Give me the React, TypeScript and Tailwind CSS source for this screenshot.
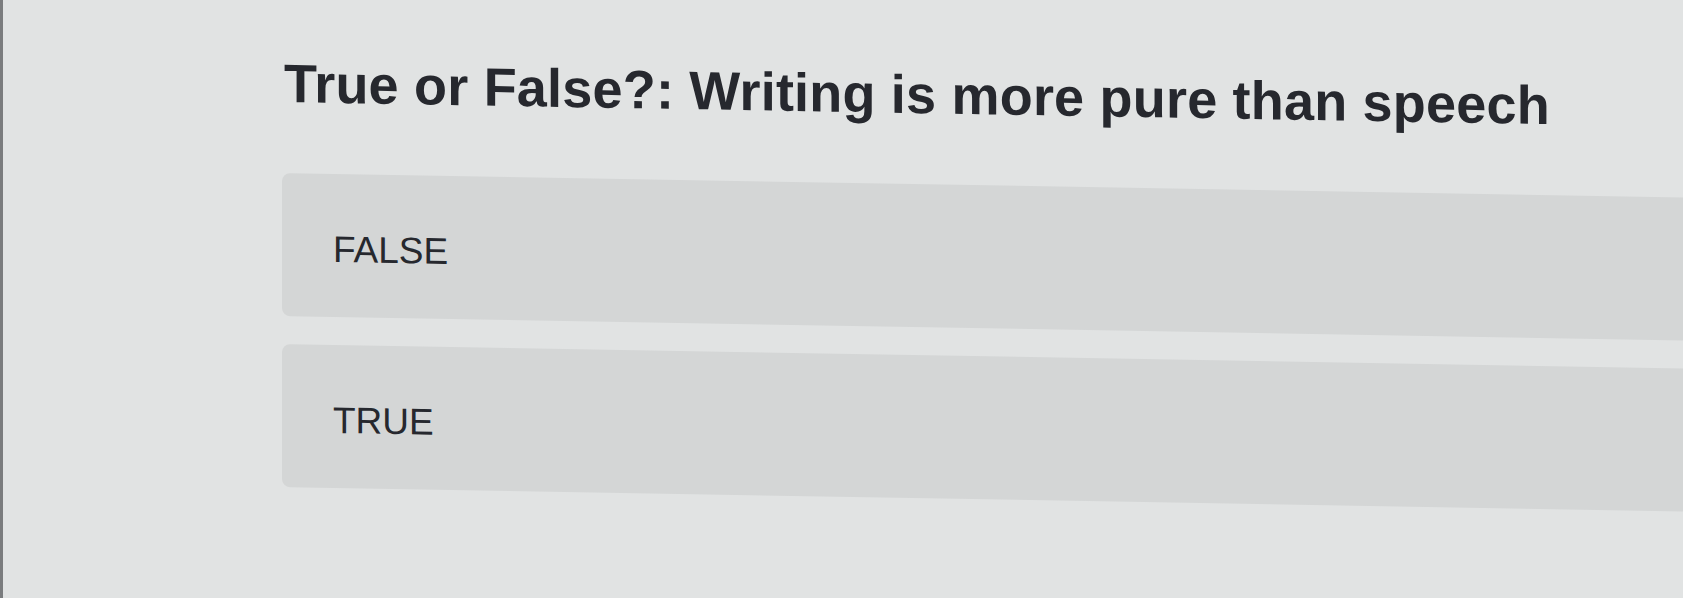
const options = ["FALSE", "TRUE"];

export default function App() {
  return (
    <div
      className="h-screen min-h-[598px] w-full overflow-hidden border-l-[3px] border-[#7a7c7e] bg-[#e1e3e3] text-[#26282e]"
      style={{ fontFamily: '"Liberation Sans", Arial, sans-serif' }}
    >
      <div className="-mr-10 ml-[279px] mt-[56px] origin-top-left skew-y-[1deg]">
        <h1 className="pl-[2px] text-[54px] font-bold leading-none tracking-[0.2px]">
          True or False?: Writing is more pure than speech
        </h1>

        {/* Answer choices */}
        <div className="mt-[63px] flex flex-col gap-[28px]">
          {options.map((opt) => (
            <button
              key={opt}
              type="button"
              className="flex h-[143px] items-center rounded-lg bg-[#d4d6d6] pl-[51px] pt-[7px] text-left text-[37px] leading-none"
            >
              {opt}
            </button>
          ))}
        </div>
      </div>
    </div>
  );
}
